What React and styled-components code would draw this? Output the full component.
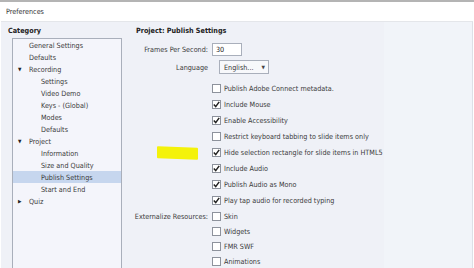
import React from "react";
import styled, { createGlobalStyle } from "styled-components";

const GlobalStyle = createGlobalStyle`
  *, *::before, *::after {
    box-sizing: border-box;
  }
  html, body {
    margin: 0;
    padding: 0;
    background: #ffffff;
  }
  body {
    font-family: "DejaVu Sans Condensed", "Liberation Sans", Arial, sans-serif;
    font-size: 7.2px;
    color: #333;
  }
`;

const categories = [
  { label: "General Settings", level: 1 },
  { label: "Defaults", level: 1 },
  { label: "Recording", level: 1, arrow: "down" },
  { label: "Settings", level: 2 },
  { label: "Video Demo", level: 2 },
  { label: "Keys - (Global)", level: 2 },
  { label: "Modes", level: 2 },
  { label: "Defaults", level: 2 },
  { label: "Project", level: 1, arrow: "down" },
  { label: "Information", level: 2 },
  { label: "Size and Quality", level: 2 },
  { label: "Publish Settings", level: 2, selected: true },
  { label: "Start and End", level: 2 },
  { label: "Quiz", level: 1, arrow: "right" },
];

const options = [
  { label: "Publish Adobe Connect metadata.", checked: false },
  { label: "Include Mouse", checked: true },
  { label: "Enable Accessibility", checked: true },
  { label: "Restrict keyboard tabbing to slide items only", checked: false },
  { label: "Hide selection rectangle for slide items in HTML5", checked: true },
  { label: "Include Audio", checked: true },
  { label: "Publish Audio as Mono", checked: true },
  { label: "Play tap audio for recorded typing", checked: true },
];

const resources = ["Skin", "Widgets", "FMR SWF", "Animations"];

const Check = ({ checked }) => (
  <Box>
    {checked && (
      <svg width="7" height="7" viewBox="0 0 7 7">
        <path d="M0.8 3.6 L2.7 5.6 L6.2 0.9" fill="none" stroke="#222" strokeWidth="1.5" />
      </svg>
    )}
  </Box>
);

const App = () => (
  <>
    <GlobalStyle />
    <Window>
      <TopStrip />
      <TitleBar>Preferences</TitleBar>
      <Panel>
        <LeftColumn>
          <Heading>Category</Heading>
          <TreeBox>
            {categories.map((c, i) => (
              <TreeRow key={i} $level={c.level} $selected={c.selected}>
                {c.arrow && <Arrow>{c.arrow === "down" ? "▼" : "▶"}</Arrow>}
                {c.label}
              </TreeRow>
            ))}
          </TreeBox>
        </LeftColumn>
        <RightColumn>
          <Heading>Project: Publish Settings</Heading>
          <FormRow $h={18} $top={2}>
            <Label>Frames Per Second:</Label>
            <TextInput>30</TextInput>
          </FormRow>
          <FormRow $h={18} $top={0}>
            <Label>Language</Label>
            <Select>
              English...
              <Caret>▼</Caret>
            </Select>
          </FormRow>
          <Options $top={5}>
            {options.map((o, i) => (
              <FormRow key={i} $h={15.9}>
                <Label />
                <Option>
                  <Check checked={o.checked} />
                  {o.label}
                </Option>
              </FormRow>
            ))}
          </Options>
          <Options $top={1}>
            {resources.map((r, i) => (
              <FormRow key={r} $h={15}>
                <Label>{i === 0 ? "Externalize Resources:" : ""}</Label>
                <Option>
                  <Check checked={false} />
                  {r}
                </Option>
              </FormRow>
            ))}
          </Options>
          <Marker />
        </RightColumn>
        <SidePane />
      </Panel>
    </Window>
  </>
);

export default App;

const Window = styled.div`
  width: 474px;
  height: 268px;
  display: flex;
  flex-direction: column;
  overflow: hidden;
  background: #fff;
`;

const TopStrip = styled.div`
  flex-shrink: 0;
  height: 2px;
  background: #b4b4b4;
`;

const TitleBar = styled.div`
  flex-shrink: 0;
  height: 19px;
  padding-left: 6px;
  display: flex;
  align-items: center;
  color: #333;
`;

const Panel = styled.div`
  flex: 1;
  min-height: 0;
  margin: 0 1px 0 1px;
  display: flex;
  background: #eff1f7;
  border-top: 1px solid #e4e6ea;
  border-right: 1px solid #dde0e6;
`;

const LeftColumn = styled.div`
  flex-shrink: 0;
  width: 121px;
  padding-left: 7px;
  display: flex;
  flex-direction: column;
`;

const Heading = styled.div`
  flex-shrink: 0;
  height: 16px;
  display: flex;
  align-items: center;
  font-weight: bold;
  color: #222;
`;

const TreeBox = styled.div`
  flex: 1;
  margin-left: 4px;
  background: #f4f5fb;
  border: 1px solid #a9afbb;
  border-bottom: none;
`;

const TreeRow = styled.div`
  position: relative;
  height: 12px;
  display: flex;
  align-items: center;
  padding-left: ${(p) => (p.$level === 1 ? 16 : 28)}px;
  background: ${(p) => (p.$selected ? "#c6d6ee" : "transparent")};
  color: #3a3a3a;
`;

const Arrow = styled.span`
  position: absolute;
  left: 5px;
  font-size: 5px;
  color: #222;
`;

const RightColumn = styled.div`
  position: relative;
  flex-shrink: 0;
  width: 262px;
  padding-left: 14px;
  display: flex;
  flex-direction: column;
`;

const SidePane = styled.div`
  flex: 1;
  background: #f1f4f9;
`;

const FormRow = styled.div`
  flex-shrink: 0;
  height: ${(p) => p.$h}px;
  margin-top: ${(p) => p.$top || 0}px;
  display: grid;
  grid-template-columns: 72px auto;
  column-gap: 4px;
  align-items: center;
  justify-items: start;
`;

const Label = styled.div`
  justify-self: end;
  color: #3a3a3a;
  white-space: nowrap;
`;

const TextInput = styled.div`
  width: 30px;
  height: 13px;
  padding-left: 3px;
  background: #fff;
  border: 1px solid #a9afbb;
  display: flex;
  align-items: center;
  color: #222;
`;

const Select = styled.div`
  margin-left: 7px;
  width: 50px;
  height: 14px;
  padding: 0 3px 0 4px;
  background: #f7f8fb;
  border: 1px solid #a9afbb;
  display: flex;
  align-items: center;
  justify-content: space-between;
  color: #333;
`;

const Caret = styled.span`
  font-size: 5px;
  color: #444;
`;

const Options = styled.div`
  flex-shrink: 0;
  margin-top: ${(p) => p.$top}px;
  display: flex;
  flex-direction: column;
`;

const Option = styled.div`
  display: flex;
  align-items: center;
  gap: 3px;
  color: #3a3a3a;
  white-space: nowrap;
`;

const Box = styled.span`
  width: 9px;
  height: 9px;
  background: #fff;
  border: 1px solid #8d929c;
  display: flex;
  align-items: center;
  justify-content: center;
`;

const Marker = styled.div`
  position: absolute;
  left: 35px;
  top: 125px;
  width: 41px;
  height: 12px;
  background: #f4f20a;
  transform: skewY(2deg);
  border-radius: 1px;
`;
